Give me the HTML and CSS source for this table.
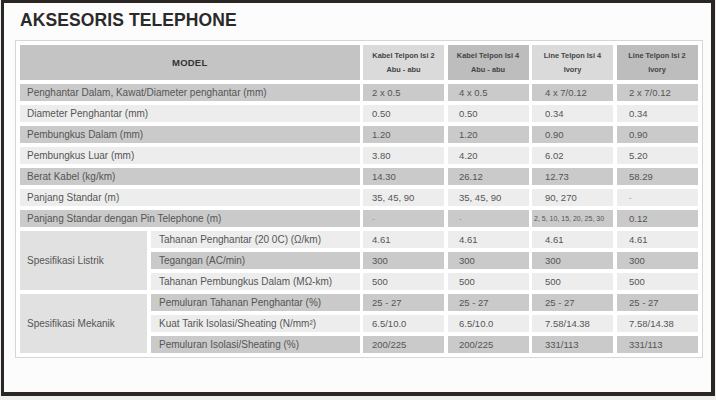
FILE: index.html
```html
<!DOCTYPE html>
<html lang="id">
<head>
<meta charset="utf-8">
<title>Aksesoris Telephone</title>
<link rel="stylesheet" href="styles.css">
</head>
<body>
<div class="frame">
  <h1 class="title">AKSESORIS TELEPHONE</h1>
  <div class="box">
    <div class="grid">
      <div class="cell hmodel span2">MODEL</div>
      <div class="cell hcol hl">Kabel Telpon Isi 2<br>Abu - abu</div>
      <div class="cell hcol hd">Kabel Telpon Isi 4<br>Abu - abu</div>
      <div class="cell hcol hl">Line Telpon Isi 4<br>Ivory</div>
      <div class="cell hcol hd">Line Telpon Isi 2<br>Ivory</div>

      <div class="cell lab span2 dk">Penghantar Dalam, Kawat/Diameter penghantar (mm)</div>
      <div class="cell v d1 dk">2 x 0.5</div><div class="cell v d2 dk">4 x 0.5</div><div class="cell v d3 dk">4 x 7/0.12</div><div class="cell v d4 dk">2 x 7/0.12</div>

      <div class="cell lab span2 lt">Diameter Penghantar (mm)</div>
      <div class="cell v d1 lt">0.50</div><div class="cell v d2 lt">0.50</div><div class="cell v d3 lt">0.34</div><div class="cell v d4 lt">0.34</div>

      <div class="cell lab span2 dk">Pembungkus Dalam (mm)</div>
      <div class="cell v d1 dk">1.20</div><div class="cell v d2 dk">1.20</div><div class="cell v d3 dk">0.90</div><div class="cell v d4 dk">0.90</div>

      <div class="cell lab span2 lt">Pembungkus Luar (mm)</div>
      <div class="cell v d1 lt">3.80</div><div class="cell v d2 lt">4.20</div><div class="cell v d3 lt">6.02</div><div class="cell v d4 lt">5.20</div>

      <div class="cell lab span2 dk">Berat Kabel (kg/km)</div>
      <div class="cell v d1 dk">14.30</div><div class="cell v d2 dk">26.12</div><div class="cell v d3 dk">12.73</div><div class="cell v d4 dk">58.29</div>

      <div class="cell lab span2 lt">Panjang Standar (m)</div>
      <div class="cell v d1 lt">35, 45, 90</div><div class="cell v d2 lt">35, 45, 90</div><div class="cell v d3 lt">90, 270</div><div class="cell v d4 lt dash">-</div>

      <div class="cell lab span2 dk">Panjang Standar dengan Pin Telephone (m)</div>
      <div class="cell v d1 dk dash">-</div><div class="cell v d2 dk dash">-</div><div class="cell v d3 dk tiny">2, 5, 10, 15, 20, 25, 30</div><div class="cell v d4 dk">0.12</div>

      <div class="cell grp rows3">Spesifikasi Listrik</div>
      <div class="cell sub lt">Tahanan Penghantar (20 0C) (Ω/km)</div>
      <div class="cell v d1 lt">4.61</div><div class="cell v d2 lt">4.61</div><div class="cell v d3 lt">4.61</div><div class="cell v d4 lt">4.61</div>

      <div class="cell sub dk">Tegangan (AC/min)</div>
      <div class="cell v d1 dk">300</div><div class="cell v d2 dk">300</div><div class="cell v d3 dk">300</div><div class="cell v d4 dk">300</div>

      <div class="cell sub lt">Tahanan Pembungkus Dalam (MΩ-km)</div>
      <div class="cell v d1 lt">500</div><div class="cell v d2 lt">500</div><div class="cell v d3 lt">500</div><div class="cell v d4 lt">500</div>

      <div class="cell grp rows3">Spesifikasi Mekanik</div>
      <div class="cell sub dk">Pemuluran Tahanan Penghantar (%)</div>
      <div class="cell v d1 dk">25 - 27</div><div class="cell v d2 dk">25 - 27</div><div class="cell v d3 dk">25 - 27</div><div class="cell v d4 dk">25 - 27</div>

      <div class="cell sub lt">Kuat Tarik Isolasi/Sheating (N/mm²)</div>
      <div class="cell v d1 lt">6.5/10.0</div><div class="cell v d2 lt">6.5/10.0</div><div class="cell v d3 lt">7.58/14.38</div><div class="cell v d4 lt">7.58/14.38</div>

      <div class="cell sub dk">Pemuluran Isolasi/Sheating (%)</div>
      <div class="cell v d1 dk">200/225</div><div class="cell v d2 dk">200/225</div><div class="cell v d3 dk">331/113</div><div class="cell v d4 dk">331/113</div>
    </div>
  </div>
</div>
</body>
</html>
```
FILE: styles.css
```css
html, body {
  margin: 0;
  padding: 0;
}
body {
  background: #efefef;
  width: 716px;
  height: 400px;
  overflow: hidden;
  font-family: "Liberation Sans", Arial, Helvetica, sans-serif;
}
.frame {
  box-sizing: border-box;
  margin-left: 1px;
  width: 714px;
  height: 396px;
  border-top: 3px solid #2b2624;
  border-left: 3px solid #2b2624;
  border-right: 4px solid #2b2624;
  border-bottom: 4px solid #2b2624;
  background: #fcfcfc;
  padding-top: 7px;
}
.title {
  margin: 0 0 0 16px;
  font-size: 17.5px;
  line-height: 20px;
  font-weight: bold;
  color: #2a2a2a;
  letter-spacing: 0.1px;
}
.box {
  margin: 10px 0 0 11px;
  width: 688px;
  box-sizing: border-box;
  border: 1px solid #d6d6d6;
  background: #ffffff;
  padding: 4px;
}
.grid {
  display: grid;
  grid-template-columns: 127px 209px 81px 81px 81px 81px;
  grid-template-rows: 35px repeat(13, 17.5px);
  gap: 3.5px;
}
.cell {
  display: flex;
  align-items: center;
  font-size: 10px;
  color: #555555;
  white-space: nowrap;
}
.span2 { grid-column: span 2; }
.rows3 { grid-row: span 3; }
.hmodel {
  justify-content: center;
  background: #c4c4c4;
  font-weight: bold;
  font-size: 9.5px;
  color: #333333;
  letter-spacing: 0.2px;
}
.hcol {
  justify-content: center;
  text-align: center;
  font-weight: bold;
  font-size: 7.4px;
  line-height: 14px;
  color: #444444;
}
.hl { background: #dadada; }
.hd { background: #bdbdbd; }
.dk { background: #cacaca; }
.lt { background: #ededed; }
.lab { padding-left: 7px; }
.sub { padding-left: 8.5px; }
.grp {
  background: #e1e1e1;
  padding-left: 7px;
}
.v { font-size: 9.5px; }
.d1 { padding-left: 9px; }
.d2 { padding-left: 11.5px; }
.d3 { padding-left: 13px; }
.d4 { padding-left: 12.5px; }
.dash { color: #8a8a8a; font-size: 8px; }
.tiny { font-size: 7px; padding-left: 2px; }
```
